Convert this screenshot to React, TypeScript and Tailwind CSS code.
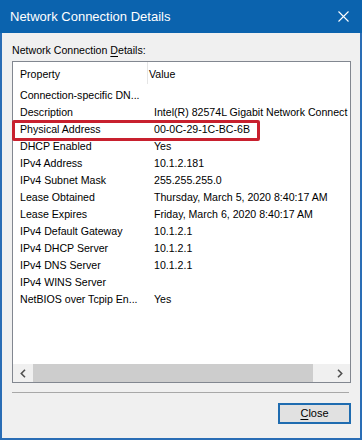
import React from "react";

const rows: [string, string][] = [
  ["Connection-specific DN...", ""],
  ["Description", "Intel(R) 82574L Gigabit Network Connect"],
  ["Physical Address", "00-0C-29-1C-BC-6B"],
  ["DHCP Enabled", "Yes"],
  ["IPv4 Address", "10.1.2.181"],
  ["IPv4 Subnet Mask", "255.255.255.0"],
  ["Lease Obtained", "Thursday, March 5, 2020 8:40:17 AM"],
  ["Lease Expires", "Friday, March 6, 2020 8:40:17 AM"],
  ["IPv4 Default Gateway", "10.1.2.1"],
  ["IPv4 DHCP Server", "10.1.2.1"],
  ["IPv4 DNS Server", "10.1.2.1"],
  ["IPv4 WINS Server", ""],
  ["NetBIOS over Tcpip En...", "Yes"],
];

export default function App() {
  return (
    <div
      className="w-[362px] h-[440px] flex flex-col bg-[#f0f0f0] text-black"
      style={{ fontFamily: '"Liberation Sans", Arial, sans-serif' }}
    >
      {/* Title bar */}
      <div className="h-[33px] shrink-0 bg-[#0b63ae] flex items-center justify-between pl-[10px] pr-[13px]">
        <span className="text-white text-[13px] leading-none">Network Connection Details</span>
        <svg width="11" height="11" viewBox="0 0 11 11" className="block">
          <path d="M0.5 0.5 L10.5 10.5 M10.5 0.5 L0.5 10.5" stroke="#ffffff" strokeWidth="1.1" fill="none" />
        </svg>
      </div>

      {/* Body */}
      <div className="flex-1 flex flex-col border-x-2 border-b-2 border-[#2a6db5] pl-[10px] pr-[9px] text-[10.6px]">
        <div className="mt-[10px] h-[14px] leading-[14px] whitespace-nowrap">
          Network Connection <span className="underline underline-offset-2">D</span>etails:
        </div>

        {/* List */}
        <div className="relative mt-[4px] h-[322px] border border-[#828790] bg-white flex flex-col">
          {/* Header */}
          <div className="h-[25px] shrink-0 flex">
            <div className="w-[134px] flex items-center pl-[7px]">Property</div>
            <div className="w-px h-[22px] bg-[#e5e5e5]" />
            <div className="flex-1 flex items-center pl-[1px]">Value</div>
          </div>
          {/* Rows */}
          {rows.map(([k, v]) => (
            <div key={k} className="h-[17px] shrink-0 flex items-center whitespace-nowrap">
              <div className="w-[135px] pl-[7px] overflow-hidden">{k}</div>
              <div className="flex-1 pl-[6px] overflow-hidden">{v}</div>
            </div>
          ))}
          <div className="flex-1" />
          {/* Horizontal scrollbar */}
          <div className="h-[18px] shrink-0 flex bg-[#f0f0f0]">
            <div className="w-[20px] flex items-center justify-center">
              <svg width="6" height="9" viewBox="0 0 6 9">
                <path d="M5 0.8 L1.3 4.5 L5 8.2" stroke="#505050" strokeWidth="1.6" fill="none" />
              </svg>
            </div>
            <div className="w-[280px] bg-[#cdcdcd]" />
            <div className="flex-1" />
            <div className="w-[20px] flex items-center justify-center">
              <svg width="6" height="9" viewBox="0 0 6 9">
                <path d="M1 0.8 L4.7 4.5 L1 8.2" stroke="#505050" strokeWidth="1.6" fill="none" />
              </svg>
            </div>
          </div>

          {/* Red highlight annotation */}
          <div className="absolute left-[-1px] top-[58px] w-[248px] h-[21px] border-[3px] border-[#c8202e] rounded-[2px]" />
        </div>

        {/* Separator */}
        <div className="mt-[9px] border-t border-[#a8a8a8] mr-[2px]" />

        {/* Button row */}
        <div className="mt-[10px] flex justify-end">
          <button className="w-[73px] h-[21px] border-2 border-[#1f6cb0] bg-[#e1e1e1] text-[11px] leading-none flex items-center justify-center">
            <span>
              <span className="underline underline-offset-2">C</span>lose
            </span>
          </button>
        </div>
      </div>
    </div>
  );
}
